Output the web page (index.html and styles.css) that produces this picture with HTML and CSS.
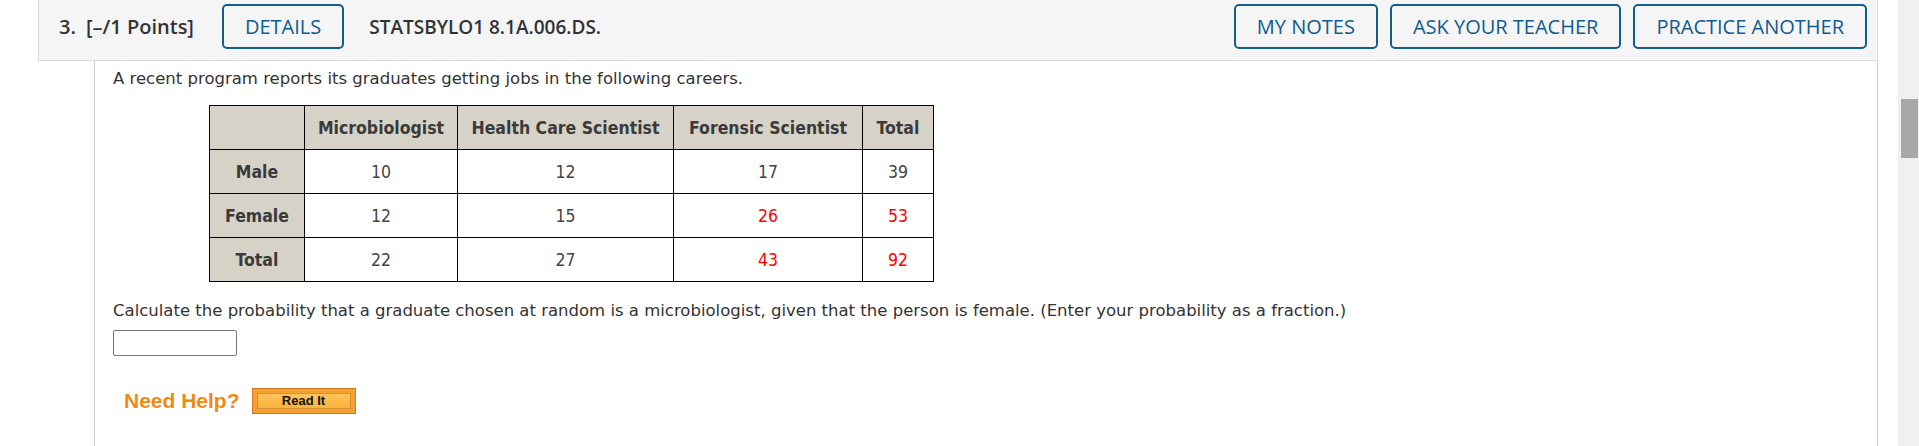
FILE: index.html
```html
<!DOCTYPE html>
<html>
<head>
  <meta charset="utf-8">
  <title>Question 3</title>
  <link rel="stylesheet" href="styles.css">
</head>
<body>
  <div class="page">
    <div class="sheet">
      <div class="q-header">
        <div class="q-title">
          <span class="q-num">3.</span>
          <span class="q-points">[&ndash;/1 Points]</span>
          <button class="q-btn">DETAILS</button>
          <span class="q-code">STATSBYLO1 8.1A.006.DS.</span>
        </div>
        <div class="q-actions">
          <button class="q-btn">MY NOTES</button>
          <button class="q-btn">ASK YOUR TEACHER</button>
          <button class="q-btn">PRACTICE ANOTHER</button>
        </div>
      </div>
      <div class="q-body">
        <p class="lead">A recent program reports its graduates getting jobs in the following careers.</p>
        <table class="careers">
          <tr>
            <th class="c0"></th>
            <th class="c1">Microbiologist</th>
            <th class="c2">Health Care Scientist</th>
            <th class="c3">Forensic Scientist</th>
            <th class="c4">Total</th>
          </tr>
          <tr>
            <th>Male</th>
            <td>10</td>
            <td>12</td>
            <td>17</td>
            <td>39</td>
          </tr>
          <tr>
            <th>Female</th>
            <td>12</td>
            <td>15</td>
            <td class="red">26</td>
            <td class="red">53</td>
          </tr>
          <tr>
            <th>Total</th>
            <td>22</td>
            <td>27</td>
            <td class="red">43</td>
            <td class="red">92</td>
          </tr>
        </table>
        <p class="ask">Calculate the probability that a graduate chosen at random is a microbiologist, given that the person is female. (Enter your probability as a fraction.)</p>
        <input class="answer" type="text">
        <div class="help">
          <span class="help-label">Need Help?</span>
          <span class="read-it"><span>Read It</span></span>
        </div>
      </div>
    </div>
    <div class="scrollbar"><div class="thumb"></div></div>
  </div>
</body>
</html>
```

FILE: styles.css
```css
html, body {
  margin: 0;
  padding: 0;
  background: white;
  height: 100%;
  overflow: hidden;
}
.page {
  display: flex;
  height: 446px;
}
.sheet {
  flex: 1;
  margin: 0 20px 0 38px;
  display: flex;
  flex-direction: column;
}
.q-header {
  display: flex;
  justify-content: space-between;
  align-items: center;
  background: #f5f5f5;
  border: 1px solid #dcdcdc;
  border-top: none;
  padding: 4px 10px 11px 20px;
  font-family: 'Open Sans', sans-serif;
  font-size: 20px;
  color: #333;
}
.q-title, .q-actions {
  display: flex;
  align-items: center;
}
.q-actions {
  gap: 12px;
}
.q-num, .q-points, .q-code {
  font-weight: 600;
}
.q-num {
  margin-right: 10px;
}
.q-points {
  margin-right: 28px;
}
.q-code {
  margin-left: 25px;
  font-size: 19px;
}
.q-btn {
  font-family: 'Open Sans', sans-serif;
  font-size: 20px;
  color: #0f5c91;
  background: #f5f5f5;
  border: 2px solid #115d8f;
  border-radius: 5px;
  height: 45px;
  padding: 0 21px;
  cursor: pointer;
}
.q-body {
  flex: 1;
  margin-left: 56px;
  border-left: 1px solid #cfcfcf;
  border-right: 1px solid #cfcfcf;
  padding: 8px 18px 0 18px;
  font-family: 'DejaVu Sans', sans-serif;
  font-size: 16.5px;
  color: #333;
}
.lead {
  margin: 0;
  line-height: 20px;
}
.careers {
  margin: 16px 0 0 96px;
  border-collapse: collapse;
  border: 1px solid #000;
  font-family: 'DejaVu Sans Condensed', 'DejaVu Sans', sans-serif;
  font-size: 17.5px;
  color: #444;
}
.careers th, .careers td {
  border: 1px solid #000;
  height: 43px;
  padding: 0;
  text-align: center;
}
.careers th {
  background: #d6d2c8;
  color: #3a3a3a;
}
.careers td {
  background: white;
}
.careers .red {
  color: #ff0000;
}
.c0 { width: 94px; }
.c1 { width: 152px; }
.c2 { width: 215px; }
.c3 { width: 188px; }
.c4 { width: 70px; }
.ask {
  margin: 19px 0 0 0;
  line-height: 20px;
}
.answer {
  display: block;
  margin-top: 9px;
  width: 124px;
  height: 26px;
  box-sizing: border-box;
  border: 1px solid #767676;
  border-radius: 2px;
}
.help {
  display: flex;
  align-items: center;
  margin: 32px 0 0 11px;
  gap: 12px;
}
.help-label {
  font-family: 'Liberation Sans', Arial, sans-serif;
  font-weight: bold;
  font-size: 21px;
  color: #f08a12;
}
.read-it {
  display: inline-block;
  width: 104px;
  height: 26px;
  box-sizing: border-box;
  background: #f5a02f;
  border: 1px solid #cf7a22;
  padding: 4px;
}
.read-it span {
  display: block;
  height: 100%;
  box-sizing: border-box;
  background: linear-gradient(#fec45a, #fbb23a);
  border: 1px solid #d99038;
  font-family: 'Liberation Sans', Arial, sans-serif;
  font-weight: bold;
  font-size: 13px;
  line-height: 14px;
  text-align: center;
  color: #111;
}
.scrollbar {
  width: 21px;
  background: #f0f0f0;
  padding: 99px 1px 0 3px;
  box-sizing: border-box;
}
.thumb {
  height: 59px;
  background: #a8a8a8;
}
```
